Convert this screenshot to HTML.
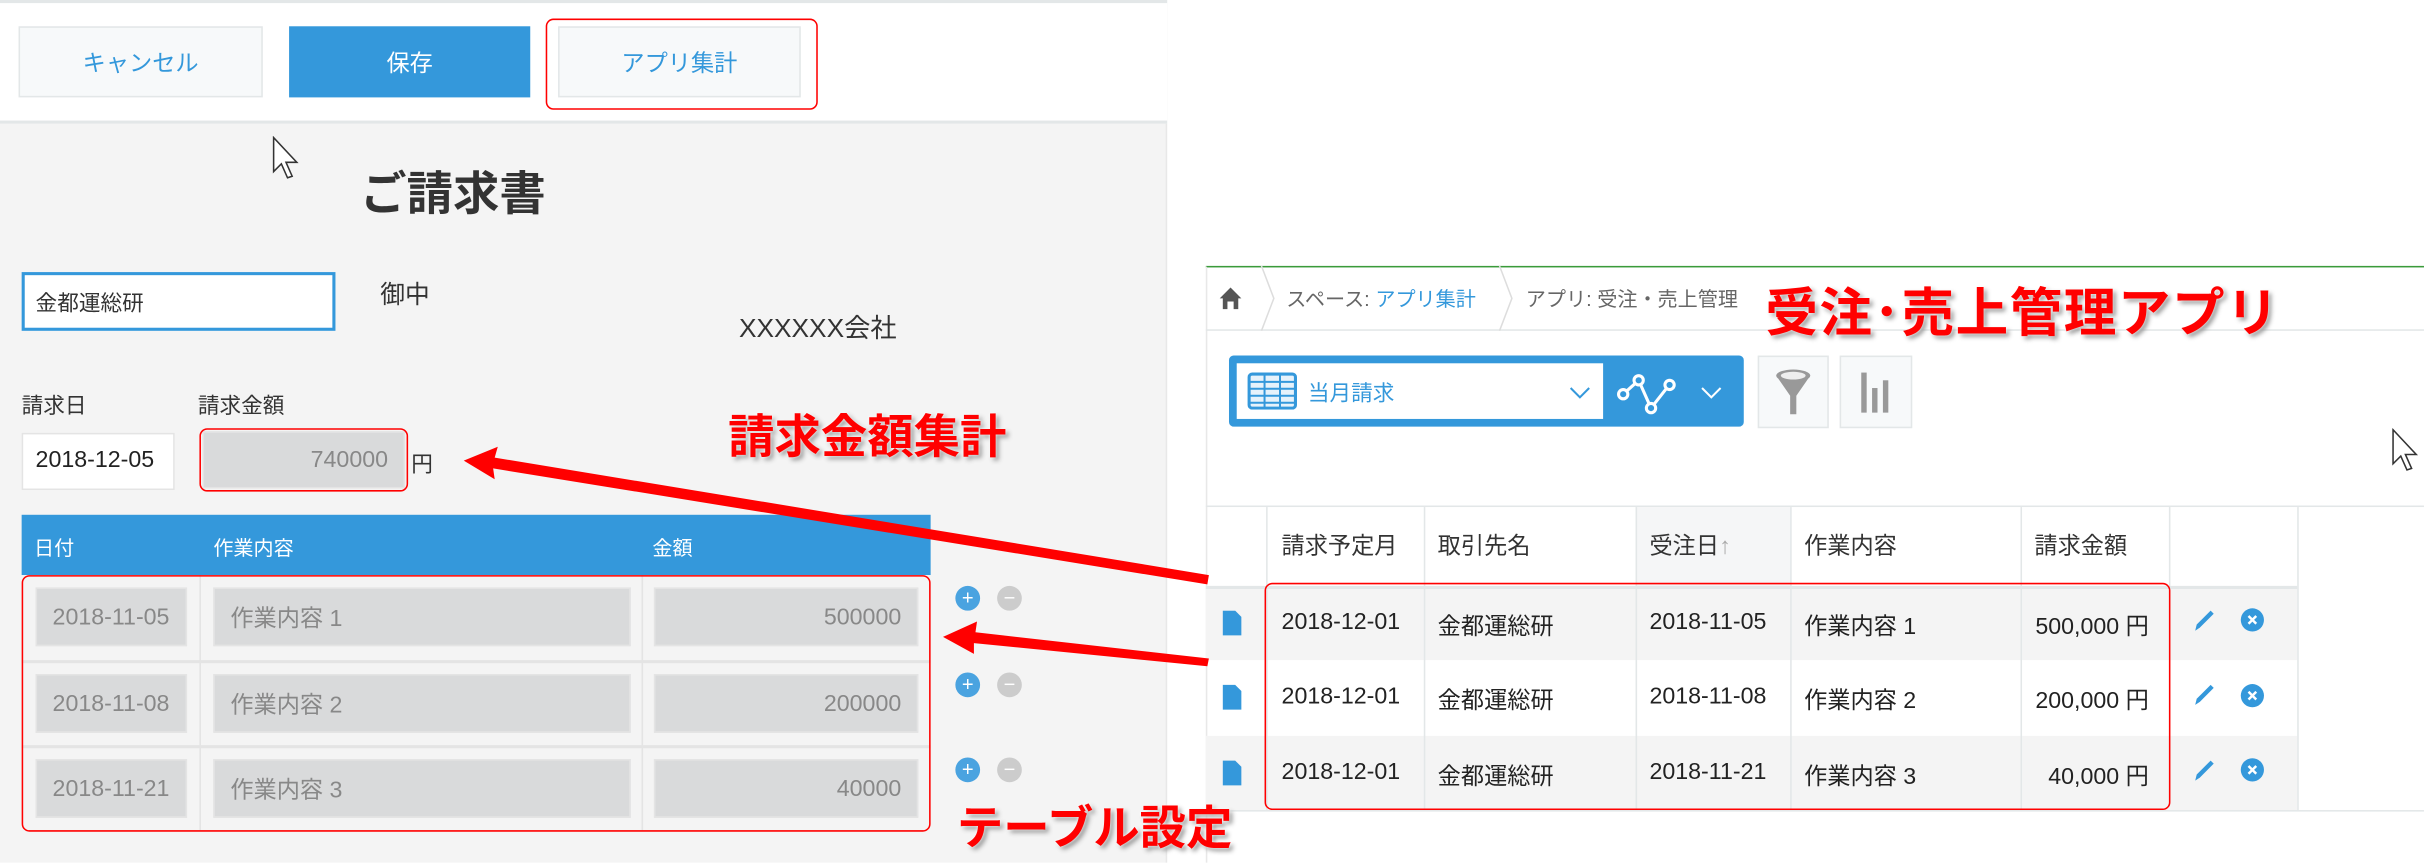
<!DOCTYPE html>
<html><head><meta charset="utf-8"><style>
html,body{margin:0;padding:0;width:2424px;height:862px;overflow:hidden;background:#fff}
#w{position:absolute;left:0;top:0;width:1568px;height:558px;transform:scale(1.5459);transform-origin:0 0;font-family:"Liberation Sans","Noto Sans CJK JP",sans-serif;color:#333}
.a{position:absolute;box-sizing:border-box}
.t{position:absolute;white-space:nowrap}
.btn{position:absolute;box-sizing:border-box;height:46px;top:17px;display:flex;align-items:center;justify-content:center;font-size:15px}
.gbox{position:absolute;box-sizing:border-box;background:#d9dadb;border:1px solid #e4e4e4;color:#888;font-size:15px;display:flex;align-items:center;padding:0 10px}
.red{color:#f00;font-weight:bold;text-shadow:0 0 2px #fff,2px 2px 3px #999}
.rc{position:absolute;box-sizing:border-box;border:1.5px solid #f00;border-radius:5px}
.circ{position:absolute;width:16px;height:16px;border-radius:50%;color:#fff;font-size:13px;line-height:16px;text-align:center}
.hd{position:absolute;top:342px;font-size:15px;color:#333}
.cell{position:absolute;font-size:15px;color:#222}
</style></head><body><div id="w">
<!-- left panel -->
<div class="a" style="left:0;top:0;width:755px;height:558px;background:#f4f4f4;border-right:1px solid #e8e8e8"></div>
<div class="a" style="left:0;top:0;width:755px;height:80px;background:#fff;border-top:2px solid #e3e7e8;border-bottom:2px solid #e3e7e8"></div>
<div class="btn" style="left:12px;width:158px;background:#f7f9fa;border:1px solid #e3e7e8;color:#3498db">キャンセル</div>
<div class="btn" style="left:187px;width:156px;background:#3498db;color:#fff">保存</div>
<div class="btn" style="left:361px;width:157px;background:#f7f9fa;border:1px solid #e3e7e8;color:#3498db">アプリ集計</div>
<div class="rc" style="left:353px;top:12px;width:176px;height:59px"></div>
<svg class="a" style="left:176px;top:88px" width="18" height="30" viewBox="0 0 18 30"><path d="M1 1 L1 23 L6 18 L10 27 L13 26 L9 17 L16 17 Z" fill="#fff" stroke="#333" stroke-width="1"/></svg>
<div class="t" style="left:233px;top:101px;font-size:30px;font-weight:bold;color:#333">ご請求書</div>
<div class="a" style="left:14px;top:176px;width:203px;height:38px;background:#fff;border:2px solid #3498db"></div>
<div class="t" style="left:23px;top:186px;font-size:14px">金都運総研</div>
<div class="t" style="left:246px;top:177px;font-size:16px">御中</div>
<div class="t" style="left:478px;top:198px;font-size:17px">XXXXXX会社</div>
<div class="t" style="left:14px;top:252px;font-size:14px">請求日</div>
<div class="t" style="left:128px;top:252px;font-size:14px">請求金額</div>
<div class="a" style="left:14px;top:280px;width:99px;height:37px;background:#fff;border:1px solid #e4e4e4"></div>
<div class="t" style="left:23px;top:289px;font-size:15px;color:#222">2018-12-05</div>
<div class="gbox" style="left:131px;top:279px;width:131px;height:37px;justify-content:flex-end">740000</div>
<div class="rc" style="left:129px;top:277px;width:135px;height:41px"></div>
<div class="t" style="left:266px;top:290px;font-size:14px">円</div>
<div class="t red" style="left:471px;top:258px;font-size:30px">請求金額集計</div>
<!-- table -->
<div class="a" style="left:14px;top:333px;width:588px;height:39px;background:#3498db"></div>
<div class="t" style="left:22px;top:344px;font-size:13px;color:#fff">日付</div>
<div class="t" style="left:138px;top:344px;font-size:13px;color:#fff">作業内容</div>
<div class="t" style="left:422px;top:344px;font-size:13px;color:#fff">金額</div>
<div class="a" style="left:14px;top:372px;width:588px;height:165px;background:#f4f4f4"></div>
<div class="a" style="left:14px;top:427px;width:588px;height:2px;background:#e4e4e4"></div>
<div class="a" style="left:14px;top:482px;width:588px;height:2px;background:#e4e4e4"></div>
<div class="a" style="left:129px;top:372px;width:1px;height:165px;background:#e4e4e4"></div>
<div class="a" style="left:415px;top:372px;width:1px;height:165px;background:#e4e4e4"></div>
<div class="gbox" style="left:23px;top:380px;width:98px;height:38px">2018-11-05</div>
<div class="gbox" style="left:138px;top:380px;width:270px;height:38px">作業内容 1</div>
<div class="gbox" style="left:423px;top:380px;width:171px;height:38px;justify-content:flex-end">500000</div>
<div class="gbox" style="left:23px;top:436px;width:98px;height:38px">2018-11-08</div>
<div class="gbox" style="left:138px;top:436px;width:270px;height:38px">作業内容 2</div>
<div class="gbox" style="left:423px;top:436px;width:171px;height:38px;justify-content:flex-end">200000</div>
<div class="gbox" style="left:23px;top:491px;width:98px;height:38px">2018-11-21</div>
<div class="gbox" style="left:138px;top:491px;width:270px;height:38px">作業内容 3</div>
<div class="gbox" style="left:423px;top:491px;width:171px;height:38px;justify-content:flex-end">40000</div>
<div class="rc" style="left:14px;top:372px;width:588px;height:166px"></div>
<div class="circ" style="left:618px;top:379px;background:#4aa3e0">+</div>
<div class="circ" style="left:645px;top:379px;background:#ccc">−</div>
<div class="circ" style="left:618px;top:435px;background:#4aa3e0">+</div>
<div class="circ" style="left:645px;top:435px;background:#ccc">−</div>
<div class="circ" style="left:618px;top:490px;background:#4aa3e0">+</div>
<div class="circ" style="left:645px;top:490px;background:#ccc">−</div>
<!-- right panel -->
<div class="a" style="left:780px;top:172px;width:788px;height:386px;background:#fff;border-top:1px solid #3a9b3a;border-left:1px solid #e8e8e8"></div>
<div class="a" style="left:780px;top:213px;width:788px;height:1px;background:#e3e7e8"></div>
<svg class="a" style="left:788px;top:185px" width="16" height="16" viewBox="0 0 16 16"><path d="M8 1 L1 8 L3 8 L3 15 L6 15 L6 10 L10 10 L10 15 L13 15 L13 8 L15 8 Z" fill="#555"/></svg>
<svg class="a" style="left:810px;top:172px" width="170" height="42"><path d="M6 0 L14 21 L6 42" fill="none" stroke="#ddd"/><path d="M160 0 L168 21 L160 42" fill="none" stroke="#ddd"/></svg>
<div class="t" style="left:832px;top:183px;font-size:13px;color:#666">スペース: <span style="color:#3498db">アプリ集計</span></div>
<div class="t" style="left:987px;top:183px;font-size:13px;color:#666">アプリ: 受注・売上管理</div>
<div class="t red" style="left:1142px;top:175px;font-size:34px;letter-spacing:1px">受注･売上管理アプリ</div>
<div class="a" style="left:795px;top:230px;width:333px;height:46px;background:#3498db;border-radius:3px"></div>
<div class="a" style="left:800px;top:235px;width:237px;height:36px;background:#fff"></div>
<svg class="a" style="left:807px;top:241px" width="32" height="24" viewBox="0 0 32 24"><rect x="1" y="1" width="30" height="22" rx="2" fill="#e6f2fb" stroke="#3498db" stroke-width="2"/><path d="M1 6H31M1 10.5H31M1 15H31M1 19.5H31M11 1V23M21 1V23" stroke="#3498db" stroke-width="1.3"/></svg>
<div class="t" style="left:846px;top:244px;font-size:14px;color:#3498db">当月請求</div>
<svg class="a" style="left:1015px;top:249px" width="14" height="10"><path d="M1 2 L7 8 L13 2" fill="none" stroke="#3498db" stroke-width="1.3"/></svg>
<svg class="a" style="left:1045px;top:240px" width="44" height="30" viewBox="0 0 44 30"><path d="M5 15 L15 6 L23 24 L34 10" fill="none" stroke="#fff" stroke-width="2"/><circle cx="5" cy="15" r="3" fill="#3498db" stroke="#fff" stroke-width="2"/><circle cx="15" cy="6" r="3" fill="#3498db" stroke="#fff" stroke-width="2"/><circle cx="23" cy="24" r="3" fill="#3498db" stroke="#fff" stroke-width="2"/><circle cx="35" cy="9" r="3" fill="#3498db" stroke="#fff" stroke-width="2"/></svg>
<svg class="a" style="left:1100px;top:249px" width="14" height="10"><path d="M1 2 L7 8 L13 2" fill="none" stroke="#fff" stroke-width="1.3"/></svg>
<div class="a" style="left:1137px;top:230px;width:46px;height:47px;background:#f7f9fa;border:1px solid #e3e7e8"></div>
<svg class="a" style="left:1147px;top:238px" width="26" height="32" viewBox="0 0 26 32"><ellipse cx="13" cy="5" rx="11" ry="4" fill="#999"/><path d="M2 5 L11 18 L11 30 L15 30 L15 18 L24 5 Z" fill="#999"/><ellipse cx="13" cy="5" rx="8" ry="2.5" fill="#eee"/></svg>
<div class="a" style="left:1190px;top:230px;width:47px;height:47px;background:#f7f9fa;border:1px solid #e3e7e8"></div>
<svg class="a" style="left:1203px;top:241px" width="22" height="26"><rect x="1" y="0" width="3.5" height="26" fill="#999"/><rect x="8" y="10" width="3.5" height="16" fill="#999"/><rect x="15" y="5" width="3.5" height="21" fill="#999"/></svg>
<svg class="a" style="left:1547px;top:277px" width="18" height="30" viewBox="0 0 18 30"><path d="M1 1 L1 23 L6 18 L10 27 L13 26 L9 17 L16 17 Z" fill="#fff" stroke="#333" stroke-width="1"/></svg>
<!-- right table -->
<div class="a" style="left:780px;top:327px;width:788px;height:1px;background:#e3e7e8"></div>
<div class="a" style="left:1058px;top:328px;width:100px;height:52px;background:#f5f6f7"></div>
<div class="a" style="left:780px;top:380px;width:706px;height:47px;background:#f4f4f4"></div>
<div class="a" style="left:780px;top:476px;width:706px;height:48px;background:#f4f4f4"></div>
<div class="a" style="left:780px;top:379px;width:706px;height:2px;background:#e3e7e8"></div>
<div class="a" style="left:780px;top:524px;width:788px;height:1px;background:#e3e7e8"></div>
<div class="a" style="left:819px;top:328px;width:1px;height:196px;background:#e3e7e8"></div>
<div class="a" style="left:921px;top:328px;width:1px;height:196px;background:#e3e7e8"></div>
<div class="a" style="left:1058px;top:328px;width:1px;height:196px;background:#e3e7e8"></div>
<div class="a" style="left:1158px;top:328px;width:1px;height:196px;background:#e3e7e8"></div>
<div class="a" style="left:1307px;top:328px;width:1px;height:196px;background:#e3e7e8"></div>
<div class="a" style="left:1403px;top:328px;width:1px;height:52px;background:#e3e7e8"></div>
<div class="a" style="left:1486px;top:328px;width:1px;height:196px;background:#e3e7e8"></div>
<div class="hd" style="left:829px">請求予定月</div>
<div class="hd" style="left:930px">取引先名</div>
<div class="hd" style="left:1067px">受注日<span style="color:#aaa">↑</span></div>
<div class="hd" style="left:1167px">作業内容</div>
<div class="hd" style="left:1316px">請求金額</div>

<div class="cell" style="left:829px;top:394px">2018-12-01</div><div class="cell" style="left:930px;top:394px">金都運総研</div><div class="cell" style="left:1067px;top:394px">2018-11-05</div><div class="cell" style="left:1167px;top:394px">作業内容 1</div><div class="cell" style="left:1300px;top:394px;width:90px;text-align:right">500,000 円</div>
<div class="cell" style="left:829px;top:442px">2018-12-01</div><div class="cell" style="left:930px;top:442px">金都運総研</div><div class="cell" style="left:1067px;top:442px">2018-11-08</div><div class="cell" style="left:1167px;top:442px">作業内容 2</div><div class="cell" style="left:1300px;top:442px;width:90px;text-align:right">200,000 円</div>
<div class="cell" style="left:829px;top:491px">2018-12-01</div><div class="cell" style="left:930px;top:491px">金都運総研</div><div class="cell" style="left:1067px;top:491px">2018-11-21</div><div class="cell" style="left:1167px;top:491px">作業内容 3</div><div class="cell" style="left:1300px;top:491px;width:90px;text-align:right">40,000 円</div>

<svg class="a" style="left:790px;top:395px" width="14" height="115"><path d="M1 0H9L13 4V16H1Z" fill="#3498db"/><path d="M1 48H9L13 52V64H1Z" fill="#3498db"/><path d="M1 97H9L13 101V113H1Z" fill="#3498db"/></svg>
<svg class="a" style="left:1418px;top:393px" width="50" height="114">
<g fill="#3498db"><path d="M2 15 L3 11 L12 2 L14 4 L5 13 Z"/><path d="M2 63 L3 59 L12 50 L14 52 L5 61 Z"/><path d="M2 112 L3 108 L12 99 L14 101 L5 110 Z"/>
<circle cx="39" cy="8" r="7.5"/><circle cx="39" cy="57" r="7.5"/><circle cx="39" cy="105" r="7.5"/></g>
<g stroke="#fff" stroke-width="1.6"><path d="M36.5 5.5L41.5 10.5M41.5 5.5L36.5 10.5"/><path d="M36.5 54.5L41.5 59.5M41.5 54.5L36.5 59.5"/><path d="M36.5 102.5L41.5 107.5M41.5 102.5L36.5 107.5"/></g></svg>
<div class="rc" style="left:818px;top:377px;width:586px;height:147px"></div>
<div class="t red" style="left:619px;top:511px;font-size:30px">テーブル設定</div>
<!-- arrows -->
<svg class="a" style="left:0;top:0" width="1568" height="558"><g fill="#f00">
<path d="M300 298 L322 289 L320 296 L782 372 L781 378 L319 303 L320 310 Z"/>
<path d="M610 412 L632 402 L631 409 L782 426 L781 431 L630 416 L630 423 Z"/></g></svg>
</div></body></html>
